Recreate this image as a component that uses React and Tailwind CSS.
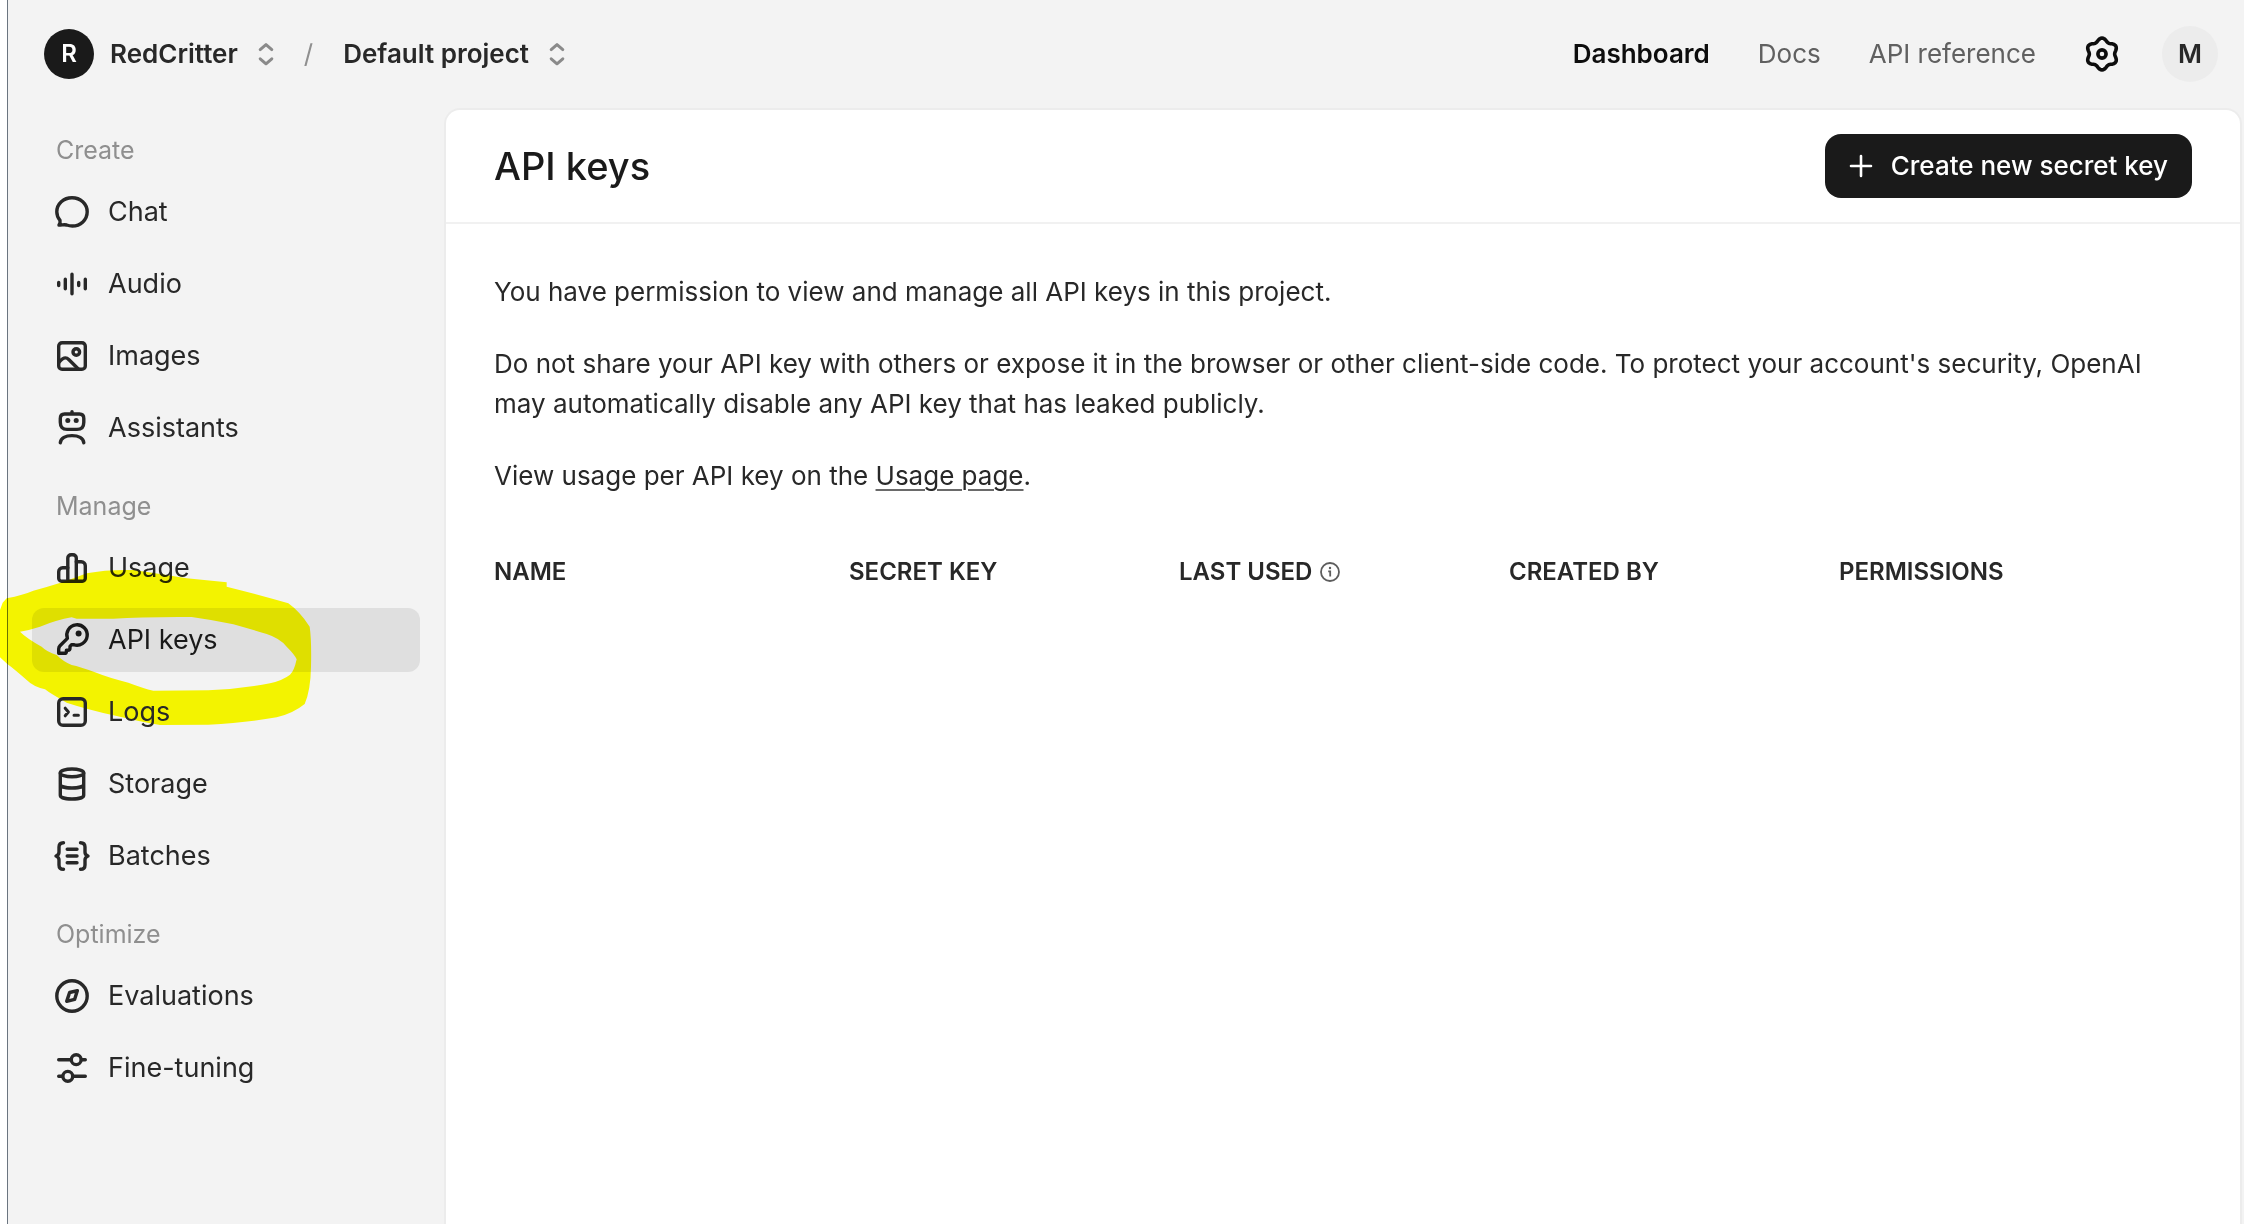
const gearPoints = Array.from({ length: 90 }, (_, i) => {
  const t = (i / 90) * Math.PI * 2;
  const r = 14.3 + 1.65 * Math.cos(6 * t);
  return `${(20 + r * Math.sin(t)).toFixed(2)},${(20 - r * Math.cos(t)).toFixed(2)}`;
}).join(" ");

function Icon({ children }) {
  return (
    <svg
      className="size-10 shrink-0"
      viewBox="0 0 40 40"
      fill="none"
      stroke="currentColor"
      strokeWidth="3.4"
      strokeLinecap="round"
      strokeLinejoin="round"
      aria-hidden="true"
    >
      {children}
    </svg>
  );
}

const icons = {
  chat: (
    <path d="M8 28.4C5.8 25.8 4.8 22.9 4.8 19.8C4.8 11.8 11.6 5.7 20 5.7S35.2 11.8 35.2 19.8S28.6 34 20.3 34C18.2 34 16.4 33.6 14.6 33C12.8 32.5 10.6 33 7 33.1C8.1 31.6 8.3 29.8 8 28.4Z" />
  ),
  audio: <path d="M6.7 18.4v3.2M13.3 15.2v9.6M20 10.2v19.6M26.7 18.4v3.2M33.3 15.2v9.6" />,
  images: (
    <>
      <rect x="6.7" y="6.7" width="26.6" height="26.6" rx="3.4" />
      <circle cx="24.3" cy="16" r="3.3" />
      <path d="M6.9 26.4C9.4 23.4 11.4 21.9 13.4 21.9C14.8 21.9 15.8 22.6 17 23.8L26.6 33.2" />
    </>
  ),
  assistants: (
    <>
      <path d="M20 3.6V5.6M12.6 6H27.4Q31.8 6 31.8 10.4V14.2Q31.8 21.4 25 21.4H15Q8.3 21.4 8.3 14.2V10.4Q8.3 6 12.6 6Z" />
      <path d="M8.3 34.8C8.8 30.4 13.5 27.6 20 27.6S31.3 30.4 31.8 34.8" />
      <circle cx="15.8" cy="12.4" r="2.5" fill="currentColor" stroke="none" />
      <circle cx="24.2" cy="12.4" r="2.5" fill="currentColor" stroke="none" />
    </>
  ),
  usage: (
    <>
      <path d="M15.8 33.3V10a3.3 3.3 0 0 1 3.3-3.3h1.9a3.3 3.3 0 0 1 3.3 3.3V33.3" />
      <path d="M15.8 19.8h-5.1a4 4 0 0 0-4 4v6.5a3 3 0 0 0 3 3h20.6a3 3 0 0 0 3-3V17.7a4 4 0 0 0-4-4h-5" />
    </>
  ),
  keys: (
    <>
      <path d="M15.4 18.4L8 25.8C7 26.8 6.7 27.6 6.7 29V33.3H12.4C13.6 33.3 14.4 32.6 14.4 31.4V30.2H15.8C17.2 30.2 18 29.4 18 28V26.4L19.6 24.7L21.6 24.6A10.2 10.2 0 1 0 15.4 18.4Z" />
      <circle cx="26.6" cy="13.4" r="3" fill="currentColor" stroke="none" />
    </>
  ),
  logs: (
    <>
      <rect x="6.7" y="6.7" width="26.6" height="26.6" rx="4.4" />
      <path strokeWidth="3" d="M13.2 16.2L16.4 20L13.2 23.8M22 23.2H26.4" />
    </>
  ),
  storage: (
    <>
      <ellipse cx="20" cy="8.9" rx="11.7" ry="3.9" />
      <path d="M8.3 8.9V31.2C8.3 33.4 13.5 35 20 35S31.7 33.4 31.7 31.2V8.9M8.3 20.2C8.3 22.4 13.5 24 20 24S31.7 22.4 31.7 20.2" />
    </>
  ),
  batches: (
    <>
      <path d="M11.5 6.7C8.4 6.7 7 8 7 11V16.2C7 18 5.6 19.3 4 20C5.6 20.7 7 22 7 23.8V29C7 32 8.4 33.3 11.5 33.3" />
      <path d="M28.5 6.7C31.6 6.7 33 8 33 11V16.2C33 18 34.4 19.3 36 20C34.4 20.7 33 22 33 23.8V29C33 32 31.6 33.3 28.5 33.3" />
      <path d="M15.2 13.3H25M15.2 20H25M15.2 26.7H25" />
    </>
  ),
  evaluations: (
    <>
      <circle cx="20" cy="20" r="15.2" />
      <path d="M25.4 14.6L17.6 16.5L14.7 25.4L22.6 23.4Z" />
    </>
  ),
  tuning: (
    <>
      <path d="M6.7 11.7H18.4M29.6 11.7H33.3M6.7 28.3H10.2M21.2 28.3H33.3" />
      <circle cx="24.2" cy="11.7" r="4.9" />
      <circle cx="15.8" cy="28.3" r="4.9" />
    </>
  ),
};

const sections = [
  {
    title: "Create",
    items: [
      ["Chat", "chat"],
      ["Audio", "audio"],
      ["Images", "images"],
      ["Assistants", "assistants"],
    ],
  },
  {
    title: "Manage",
    items: [
      ["Usage", "usage"],
      ["API keys", "keys"],
      ["Logs", "logs"],
      ["Storage", "storage"],
      ["Batches", "batches"],
    ],
  },
  {
    title: "Optimize",
    items: [
      ["Evaluations", "evaluations"],
      ["Fine-tuning", "tuning"],
    ],
  },
];

function Highlighter() {
  return (
    <svg
      className="pointer-events-none absolute -left-8 -top-12 h-[170px] w-[312px] mix-blend-multiply"
      viewBox="0 240 936 510"
      aria-hidden="true"
    >
      <path
        fill="#ffff00"
        fillRule="evenodd"
        d="M0 390L8 368L20 355Q70 345 100 332Q180 312 260 280Q320 268 400 270Q470 280 560 295L680 307V320Q780 345 865 370Q900 395 929 440Q935 480 933 560Q932 630 914 672Q880 700 830 712Q740 728 625 734L480 735Q420 725 350 708Q260 688 200 668Q150 640 135 628Q100 620 80 600Q40 565 22 552L0 532ZM60 455Q90 450 120 440Q170 420 215 412L230 416H340Q430 410 575 411Q640 420 700 433Q760 450 800 462Q840 475 860 500Q885 525 890 538Q882 575 870 584Q850 600 810 610Q720 627 625 631L460 632Q430 625 385 608Q330 595 285 577Q240 560 215 555Q190 545 170 525Q140 515 125 500Q80 475 60 455Z"
      />
    </svg>
  );
}

function NavItem({ label, icon }) {
  const active = icon === "keys";
  return (
    <li className="relative">
      <a
        href="#"
        aria-current={active ? "page" : undefined}
        className={
          active
            ? "flex h-16 items-center gap-4 rounded-xl bg-[#dfdfdf] px-5 text-[#1a1a1a]"
            : "flex h-16 items-center gap-4 rounded-xl px-5 text-[#282828]"
        }
      >
        <Icon>{icons[icon]}</Icon>
        <span>{label}</span>
      </a>
      {active && <Highlighter />}
    </li>
  );
}

function Switcher({ children }) {
  return (
    <button type="button" className="flex items-center gap-5 font-semibold">
      {children}
      <svg
        className="h-6 w-4 text-[#8a8a8a]"
        viewBox="0 0 16 24"
        fill="none"
        stroke="currentColor"
        strokeWidth="3"
        strokeLinecap="round"
        strokeLinejoin="round"
        aria-hidden="true"
      >
        <path d="M2.2 7.6L8 2.6L13.8 7.6M2.2 16.8L8 21.8L13.8 16.8" />
      </svg>
    </button>
  );
}

export default function App() {
  return (
    <div className="flex min-h-screen flex-col border-l-[7px] border-white bg-[#f3f3f3] font-['Inter',sans-serif] text-[26px] leading-10 text-[#282828]">
      <div className="flex flex-1 flex-col border-l border-[#6b7580]">
        <header className="flex h-[108px] items-center justify-between pl-9 pr-[26px]">
          <div className="flex items-center">
            <span className="mr-4 flex size-[50px] items-center justify-center rounded-full bg-[#1a1a1a] text-2xl font-semibold text-white">
              R
            </span>
            <Switcher>RedCritter</Switcher>
            <span className="mx-[30px] text-[#8f8f8f]">/</span>
            <Switcher>Default project</Switcher>
          </div>
          <nav className="flex items-center">
            <div className="flex gap-12 text-[#606060]">
              <a href="#" className="font-semibold text-[#0d0d0d]">
                Dashboard
              </a>
              <a href="#">Docs</a>
              <a href="#">API reference</a>
            </div>
            <button type="button" aria-label="Settings" className="ml-[46px] mr-10 text-[#0d0d0d]">
              <svg
                className="size-10"
                viewBox="0 0 40 40"
                fill="none"
                stroke="currentColor"
                strokeWidth="3.6"
                strokeLinejoin="round"
                aria-hidden="true"
              >
                <polygon points={gearPoints} />
                <circle cx="20" cy="20" r="4.1" />
              </svg>
            </button>
            <button
              type="button"
              aria-label="Account"
              className="flex size-14 items-center justify-center rounded-full bg-[#ececec] font-semibold"
            >
              M
            </button>
          </nav>
        </header>

        <div className="flex flex-1">
          <aside className="w-[436px] shrink-0 px-6 pb-10 pt-6">
            <nav className="flex flex-col gap-7 text-[27px]">
              {sections.map((section) => (
                <section key={section.title}>
                  <h2 className="mb-3 pl-6 text-[25px] leading-9 text-[#8f8f8f]">{section.title}</h2>
                  <ul className="flex flex-col gap-2">
                    {section.items.map(([label, icon]) => (
                      <NavItem key={icon} label={label} icon={icon} />
                    ))}
                  </ul>
                </section>
              ))}
            </nav>
          </aside>

          <main className="mr-0.5 min-w-0 flex-1 rounded-t-2xl border-2 border-b-0 border-[#ececec] bg-white">
            <div className="flex items-center justify-between border-b-2 border-[#f1f1f1] px-12 py-6">
              <h1 className="text-[38px] font-medium text-[#1a1a1a]">API keys</h1>
              <button
                type="button"
                className="flex h-16 items-center gap-[18px] rounded-2xl bg-[#1a1a1a] px-6 font-medium text-white"
              >
                <svg
                  className="size-6"
                  viewBox="0 0 24 24"
                  stroke="currentColor"
                  strokeWidth="2.6"
                  strokeLinecap="round"
                  aria-hidden="true"
                >
                  <path d="M12 2V22M2 12H22" />
                </svg>
                Create new secret key
              </button>
            </div>

            <div className="flex flex-col gap-8 px-12 py-12">
              <p>You have permission to view and manage all API keys in this project.</p>
              <p>
                Do not share your API key with others or expose it in the browser or other client-side
                code. To protect your account's security, OpenAI may automatically disable any API key
                that has leaked publicly.
              </p>
              <p>
                View usage per API key on the{" "}
                <a href="#" className="underline decoration-[#6a6a6a] decoration-2 underline-offset-4">
                  Usage page
                </a>
                .
              </p>
              <table className="mt-6 w-full table-fixed text-left text-2xl leading-10">
                <colgroup>
                  <col className="w-[355px]" />
                  <col />
                  <col />
                  <col />
                  <col className="w-[353px]" />
                </colgroup>
                <thead>
                  <tr>
                    <th scope="col" className="font-semibold">NAME</th>
                    <th scope="col" className="font-semibold">SECRET KEY</th>
                    <th scope="col" className="font-semibold">
                      <span className="flex items-center gap-2">
                        LAST USED
                        <svg
                          className="size-5 text-[#5d5d5d]"
                          viewBox="0 0 20 20"
                          fill="none"
                          stroke="currentColor"
                          strokeWidth="1.8"
                          aria-hidden="true"
                        >
                          <circle cx="10" cy="10" r="9" />
                          <path d="M8.2 9.4H10.2V14.6" />
                          <circle cx="10" cy="6" r="1.2" fill="currentColor" stroke="none" />
                        </svg>
                      </span>
                    </th>
                    <th scope="col" className="font-semibold">CREATED BY</th>
                    <th scope="col" className="font-semibold">PERMISSIONS</th>
                  </tr>
                </thead>
              </table>
            </div>
          </main>
        </div>
      </div>
    </div>
  );
}
